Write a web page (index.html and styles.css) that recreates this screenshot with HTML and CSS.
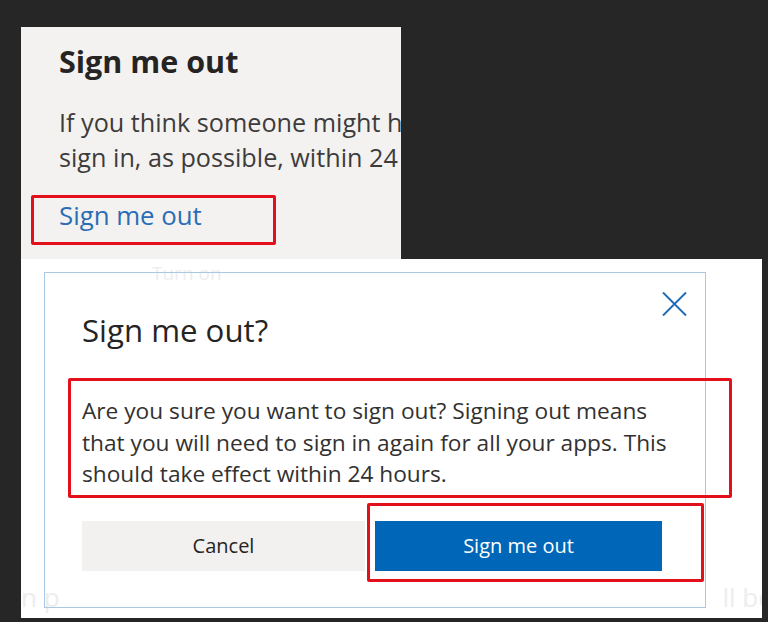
FILE: index.html
```html
<!DOCTYPE html>
<html lang="en">
<head>
<meta charset="utf-8">
<title>Sign me out</title>
<link rel="stylesheet" href="styles.css">
</head>
<body>
<div class="page">
  <section class="card">
    <h2 class="card-title">Sign me out</h2>
    <p class="card-text">If you think someone might have access to your account, we'll sign you out wherever you<br>sign in, as possible, within 24 hours.</p>
    <a class="card-link" href="#">Sign me out</a>
    <div class="mark mark-link"></div>
  </section>
  <section class="panel">
    <div class="ghost ghost-top">Turn on</div>
    <div class="ghost ghost-bottom"><span>n p</span><span>ll be s</span></div>
    <div class="dialog">
      <div class="dialog-head">
        <h3 class="dialog-title">Sign me out?</h3>
        <button class="close" aria-label="Close">
          <svg width="25" height="24" viewBox="0 0 25 24"><path d="M1 0.5 L24 23.5 M24 0.5 L1 23.5" stroke="#1f6bb8" stroke-width="2" fill="none"/></svg>
        </button>
      </div>
      <p class="dialog-text">Are you sure you want to sign out? Signing out means that you will need to sign in again for all your apps. This should take effect within 24 hours.</p>
      <div class="actions">
        <button class="btn btn-cancel">Cancel</button>
        <button class="btn btn-primary">Sign me out</button>
      </div>
    </div>
    <div class="mark mark-text"></div>
    <div class="mark mark-button"></div>
  </section>
</div>
</body>
</html>
```
FILE: styles.css
```css
* { box-sizing: border-box; }
html, body {
  margin: 0;
  padding: 0;
  width: 768px;
  height: 622px;
  overflow: hidden;
  background: #262626;
  font-family: "Open Sans", "Noto Sans", sans-serif;
}
.page {
  padding: 27px 6px 0 21px;
}
.card {
  position: relative;
  width: 380px;
  height: 232px;
  background: #f3f2f1;
  padding: 16px 0 0 38px;
  overflow: hidden;
}
.card-title {
  margin: 0;
  font-size: 30.5px;
  line-height: 36px;
  font-weight: 700;
  color: #252423;
}
.card-text {
  margin: 26px 0 0;
  font-size: 25.2px;
  line-height: 35px;
  color: #3d3c3b;
  white-space: nowrap;
}
.card-link {
  display: block;
  margin-top: 23px;
  font-size: 25.8px;
  line-height: 35px;
  color: #2a6db5;
  text-decoration: none;
}
.mark {
  position: absolute;
  border: 3px solid #e3101c;
  border-radius: 2px;
  pointer-events: none;
}
.mark-link {
  left: 10px;
  top: 168px;
  width: 245px;
  height: 50px;
}
.panel {
  position: relative;
  width: 741px;
  height: 359px;
  background: #fff;
  padding: 13px 0 0 23px;
  overflow: hidden;
}
.ghost {
  position: absolute;
  color: #ededed;
  font-size: 22px;
  line-height: 26px;
  white-space: nowrap;
}
.ghost-top {
  left: 131px;
  top: 1px;
  font-size: 19px;
  color: #eeeeee;
}
.ghost-bottom {
  left: 0;
  right: -30px;
  top: 325px;
  display: flex;
  justify-content: space-between;
  font-size: 26px;
}
.dialog {
  position: relative;
  width: 662px;
  height: 336px;
  border: 1px solid #a8c8e6;
  padding: 19px 18px 0 37px;
}
.dialog-head {
  display: flex;
  justify-content: space-between;
  align-items: flex-start;
}
.dialog-title {
  margin: 20px 0 0;
  font-size: 31.2px;
  line-height: 36px;
  font-weight: 400;
  color: #252423;
}
.close {
  width: 25px;
  height: 24px;
  padding: 0;
  border: 0;
  background: transparent;
  display: flex;
}
.dialog-text {
  margin: 47px 0 0;
  width: 598px;
  font-size: 22.7px;
  line-height: 31.5px;
  color: #323130;
}
.actions {
  margin-top: 31px;
  width: 580px;
  display: grid;
  grid-template-columns: 283px 287px;
  column-gap: 10px;
}
.btn {
  height: 50px;
  border: 0;
  font-family: inherit;
  font-size: 20px;
  padding: 0;
}
.btn-cancel {
  background: #f2f1f0;
  color: #252423;
}
.btn-primary {
  background: #0067b8;
  color: #fff;
}
.mark-text {
  left: 47px;
  top: 119px;
  width: 664px;
  height: 120px;
}
.mark-button {
  left: 346px;
  top: 244px;
  width: 337px;
  height: 79px;
}
```
